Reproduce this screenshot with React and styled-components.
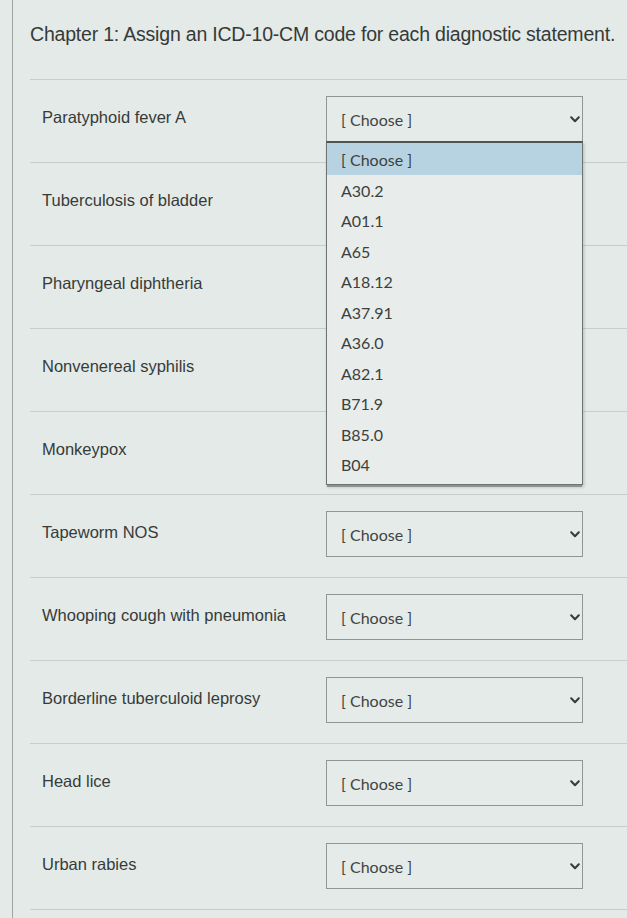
import React from "react";
import styled, { createGlobalStyle } from "styled-components";

const GlobalStyle = createGlobalStyle`
  html, body {
    margin: 0;
    padding: 0;
    background: #e4eae7;
  }
  body {
    font-family: "Liberation Sans", Arial, sans-serif;
    color: #3b403f;
  }
`;

const questions = [
  "Paratyphoid fever A",
  "Tuberculosis of bladder",
  "Pharyngeal diphtheria",
  "Nonvenereal syphilis",
  "Monkeypox",
  "Tapeworm NOS",
  "Whooping cough with pneumonia",
  "Borderline tuberculoid leprosy",
  "Head lice",
  "Urban rabies",
];

const options = [
  "A30.2",
  "A01.1",
  "A65",
  "A18.12",
  "A37.91",
  "A36.0",
  "A82.1",
  "B71.9",
  "B85.0",
  "B04",
];

// the open list of the first row lies over the next four rows
const OPEN_ROW = 0;
const COVERED_ROWS = 4;

function Chevron() {
  return (
    <svg width="10" height="7" viewBox="0 0 10 7">
      <path d="M1.2 1.3 L5 5.2 L8.8 1.3" fill="none" stroke="#363b3b" strokeWidth="2" strokeLinecap="round" strokeLinejoin="round" />
    </svg>
  );
}

function Select({ open, covered }) {
  return (
    <SelectBox $open={open} $covered={covered}>
      <SelectText>[ Choose ]</SelectText>
      <Chevron />
      {open && (
        <ListBox>
          <Option $active>[ Choose ]</Option>
          {options.map((o) => (
            <Option key={o}>{o}</Option>
          ))}
        </ListBox>
      )}
    </SelectBox>
  );
}

export default function App() {
  return (
    <>
      <GlobalStyle />
      <Page>
        <Frame>
          <Header>
            <Title>Chapter 1: Assign an ICD-10-CM code for each diagnostic statement.</Title>
          </Header>
          {questions.map((q, i) => (
            <Row key={q}>
              <Label>{q}</Label>
              <Select
                open={i === OPEN_ROW}
                covered={i > OPEN_ROW && i <= OPEN_ROW + COVERED_ROWS}
              />
            </Row>
          ))}
        </Frame>
      </Page>
    </>
  );
}

const Page = styled.div`
  min-height: 918px;
  padding-left: 12px;
  background: #e4eae7;
  overflow: hidden;
`;

const Frame = styled.div`
  min-height: 918px;
  border-left: 1px solid #9ea6a2;
`;

const Header = styled.div`
  margin-left: 17px;
  height: 80px;
  box-sizing: border-box;
  padding-top: 22px;
  border-bottom: 1px solid #c7cdca;
`;

const Title = styled.h1`
  margin: 0;
  font-size: 19.5px;
  font-weight: 400;
  line-height: 24px;
  letter-spacing: -0.2px;
  color: #353a39;
  white-space: nowrap;
`;

const Row = styled.div`
  margin-left: 17px;
  height: 83px;
  box-sizing: border-box;
  border-bottom: 1px solid #c7cdca;
  display: flex;
  align-items: flex-start;
  padding-top: 16px;
`;

const Label = styled.div`
  width: 296px;
  box-sizing: border-box;
  padding: 11px 0 0 12px;
  font-size: 16.5px;
  line-height: 20px;
  color: #363b3a;
`;

const SelectBox = styled.div`
  position: relative;
  width: 257px;
  height: 46px;
  box-sizing: border-box;
  border: 1px solid #8f9793;
  border-bottom-color: ${(p) => (p.$open ? "#4c5553" : "#8f9793")};
  display: flex;
  align-items: center;
  justify-content: space-between;
  padding: 0 2px 0 14px;
  font-family: Lato, "Noto Sans", sans-serif;
  background: #e5ebe8;
  visibility: ${(p) => (p.$covered ? "hidden" : "visible")};
`;

const SelectText = styled.span`
  font-size: 16px;
  color: #3f4443;
`;

const ListBox = styled.div`
  position: absolute;
  top: 100%;
  left: -1px;
  width: 257px;
  box-sizing: border-box;
  border: 1px solid #6d7572;
  border-top: 2px solid #4c5553;
  padding-bottom: 4px;
  background: #e8edeb;
  box-shadow: 0 3px 0 -1px #8c9491, 1px 2px 3px rgba(0, 0, 0, 0.2);
  z-index: 2;
  visibility: visible;
`;

const Option = styled.div`
  height: ${(p) => (p.$active ? "32px" : "30.5px")};
  display: flex;
  align-items: center;
  padding-left: 14px;
  font-size: 16px;
  color: #3c4140;
  background: ${(p) => (p.$active ? "#b7d3e2" : "transparent")};
`;
